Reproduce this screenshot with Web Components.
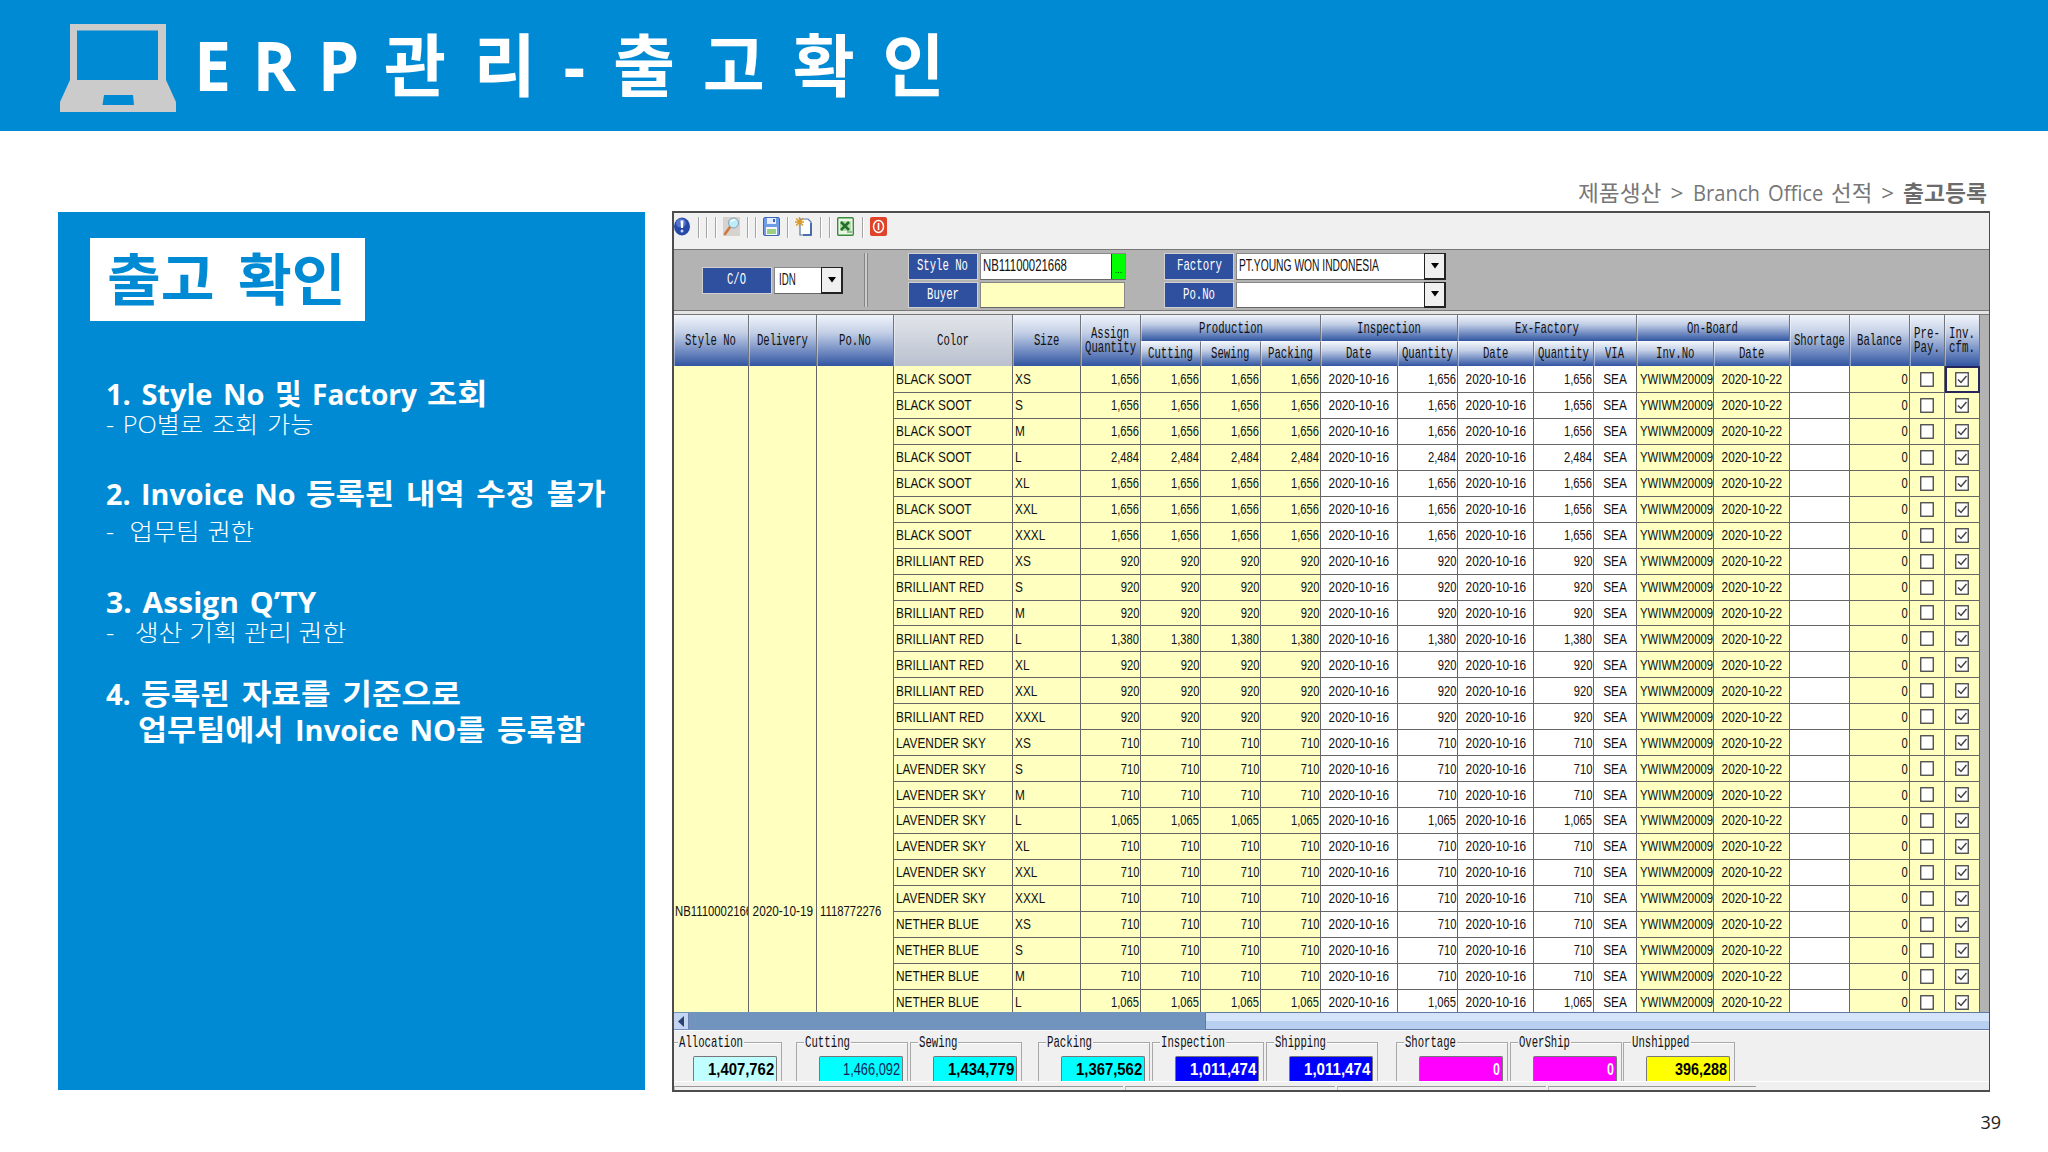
<!DOCTYPE html>
<html lang="ko">
<head>
<meta charset="utf-8">
<title>ERP관리-출고확인</title>
<style>
  html, body { margin: 0; }
  body {
    width: 2048px;
    height: 1152px;
    overflow: hidden;
    background: #fff;
    font-family: "Open Sans", "Noto Sans CJK KR", sans-serif;
  }
</style>
</head>
<body>
<erp-slide></erp-slide>

<script>
"use strict";

// shared helper: attach an open shadow root from a html string
const render = (el, html) => {
  const template = document.createElement('template');
  template.innerHTML = html;
  const root = el.attachShadow({mode: 'open'});
  root.appendChild(template.content.cloneNode(true));
  return root;
};

// fixed pitch caption of the ERP client
const label = (text, pitch = 6.4) => `<fit-text class="mono" w="${(text.length * pitch).toFixed(1)}">${text}</fit-text>`;

const MONO = `
  .mono { font: 17px/14px "Liberation Mono", monospace; }
`;

// slide = header + breadcrumb + two columns
class ErpSlide extends HTMLElement {
  constructor() {
    super();
    render(this, `
      <style>
        :host { display: block; width: 2048px; height: 1152px; }
        nav {
          display: flex; justify-content: flex-end; align-items: center;
          height: 41px; padding: 41px 61px 0 0; color: #777;
          font-size: 21.5px; line-height: 41px;
        }
        nav .path { word-spacing: 3px; font-weight: 400; }
        nav .here { font-weight: 700; color: #6b6b6b; }
        main { display: flex; gap: 27px; padding-left: 58px; height: 881px; margin-top: -2px; }
        footer { padding: 16px 47px 0 0; text-align: right; font-size: 18px; line-height: 28px; color: #222; }
      </style>
      <slide-header></slide-header>
      <nav><fit-text class="path" w="115">제품생산 &gt;&nbsp;</fit-text><fit-text class="path" w="138">Branch Office&nbsp;</fit-text><fit-text class="path" w="72">선적 &gt;&nbsp;</fit-text><fit-text class="here" w="84">출고등록</fit-text></nav>
      <main>
        <guide-panel></guide-panel>
        <erp-window></erp-window>
      </main>
      <footer>39</footer>
    `);
  }
}

class SlideHeader extends HTMLElement {
  constructor() {
    super();
    render(this, `
      <style>
        :host {
          display: flex; height: 131px; box-sizing: border-box; padding: 0 60px;
          background: #008ad3; color: #fff;
        }
        svg { flex: none; margin-top: 24px; }
        h1 { display: flex; margin: 0 0 0 18px; font-size: 68px; line-height: 130px; font-weight: 700; }
        .lat { letter-spacing: 22px; }
        .han { letter-spacing: 28px; margin-left: 3px; }
      </style>
      <svg width="116" height="88" viewBox="0 0 116 88">
        <path fill="#cbcbcb" fill-rule="evenodd" d="M10 0H106V56L116 78V88H0V78L10 56ZM17 6.500V56H98V6.500ZM44 71L42.500 81H74L73 71Z"/>
      </svg>
      <h1><fit-text class="lat" w="187">ERP</fit-text><fit-text class="han" w="588">관리-출고확인</fit-text></h1>
    `);
  }
}

class GuidePanel extends HTMLElement {
  constructor() {
    super();
    render(this, `
      <style>
        :host { display: block; flex: none; width: 587px; height: 878px; margin-top: 1px; background: #008ad3; color: #fff; }
        h2 {
          box-sizing: border-box; width: 275px; height: 83px; margin: 0 0 47px 32px; padding-left: 17px;
          background: #fff; color: #008ad3; font-size: 56px; line-height: 81px; word-spacing: 8px;
        }
        .pad { height: 26px; }
        ol { list-style: none; margin: 0; padding: 0 0 0 48px; }
        li { display: block; }
        b { display: flex; font-size: 29px; line-height: 36px; height: 36px; font-weight: 700; word-spacing: 3px; }
        p { display: block; margin: 0; font-size: 23px; line-height: 30px; height: 30px; font-weight: 300; word-spacing: 2px; }
      </style>
      <div class="pad"></div>
      <h2><fit-text w="239">출고 확인</fit-text></h2>
      <ol>
        <li style="margin-top:55px"><b><fit-text w="169">1. Style No&nbsp;</fit-text><fit-text w="37">및&nbsp;</fit-text><fit-text w="115">Factory&nbsp;</fit-text><fit-text w="60">조회</fit-text></b>
          <p style="margin-top:-3px"><fit-text w="207">- PO별로 조회 가능</fit-text></p></li>
        <li style="margin-top:37px"><b><fit-text w="200">2. Invoice No&nbsp;</fit-text><fit-text w="300">등록된 내역 수정 불가</fit-text></b>
          <p style="margin-top:4px"><fit-text w="148" style="word-spacing:1px">-&nbsp; 업무팀 권한</fit-text></p></li>
        <li style="margin-top:38px"><b><fit-text w="210">3. Assign Q’TY</fit-text></b>
          <p style="margin-top:-3px"><fit-text w="241" style="word-spacing:0">-&nbsp;&nbsp; 생산 기획 관리 권한</fit-text></p></li>
        <li style="margin-top:29px"><b><fit-text w="35">4.&nbsp;</fit-text><fit-text w="320">등록된 자료를 기준으로</fit-text></b>
          <b style="padding-left:32px"><fit-text w="157">업무팀에서&nbsp;</fit-text><fit-text w="161">Invoice NO</fit-text><fit-text w="129">를 등록함</fit-text></b></li>
      </ol>
    `);
  }
}

class ErpWindow extends HTMLElement {
  constructor() {
    super();
    render(this, `
      <style>
        :host {
          display: flex; flex-direction: column; flex: none; box-sizing: border-box;
          width: 1318px; height: 881px; border: 2px solid #4d4d4f; border-right-width: 1px;
          background: #f0f0f0; overflow: hidden; color: #111;
        }
      </style>
      <erp-toolbar></erp-toolbar>
      <erp-filter></erp-filter>
      <erp-grid></erp-grid>
      <erp-scroll></erp-scroll>
      <erp-totals></erp-totals>
    `);
  }
}

class ErpToolbar extends HTMLElement {
  constructor() {
    super();
    render(this, `
      <style>
        :host { display: flex; flex: none; height: 36px; padding-top: 4px; box-sizing: border-box; background: #f0f0f0; }
        svg { flex: none; width: 17px; height: 19px; }
        i { flex: none; width: 1px; height: 21px; background: #a5a5a5; box-shadow: 1px 0 #fff; }
      </style>
      <svg viewBox="0 0 17 19"><ellipse cx="8" cy="9.500" rx="8" ry="9" fill="#2549a8"/><ellipse cx="7" cy="6" rx="5" ry="4.500" fill="#5474cc"/><path d="M6.500 3.500H9.500L9 11H7Z" fill="#fff"/><circle cx="8" cy="14" r="1.500" fill="#c8d4ff"/></svg>
      <i style="margin-left:7px"></i><i style="margin-left:7px"></i><i style="margin-left:8px"></i>
      <svg style="margin-left:7px" viewBox="0 0 17 19"><path d="M0 0H17V19H0Z" fill="#d6d3cf"/><path d="M7 10L2 17" stroke="#d0783c" stroke-width="2.600" stroke-linecap="round"/><circle cx="10.500" cy="6" r="5" fill="#bdecfa" stroke="#8a9fb0"/><path d="M8 5Q9 2.500 12 3" stroke="#fff" stroke-width="1.500" fill="none"/></svg>
      <i style="margin-left:7px"></i><i style="margin-left:7px"></i>
      <svg style="margin-left:7px" viewBox="0 0 17 19"><rect x=".5" y=".5" width="16" height="18" rx="1.500" fill="#6e9be6" stroke="#3b66b8"/><path d="M4 1H13V7H4Z" fill="#e6eefb"/><path d="M10 2H12V5H10Z" fill="#3b66b8"/><path d="M3 10H14V18H3Z" fill="#f4f7ff"/><path d="M4 12H13V17H4Z" fill="#9bcf82"/></svg>
      <i style="margin-left:7px"></i>
      <svg style="margin-left:7px" viewBox="0 0 17 19"><path d="M5 2H13L16 5V18H5Z" fill="#fdfeff" stroke="#5a76a8" stroke-width="1.200"/><path d="M16 6V18H8" fill="none" stroke="#3557a5" stroke-width="1.500"/><path d="M4.500 0V10M0 5H9M1.200 1.500L8 8.500M8 1.500L1.200 8.500" stroke="#dc9a22" stroke-width="1.400"/></svg>
      <i style="margin-left:8px"></i><i style="margin-left:8px"></i>
      <svg style="margin-left:7px" viewBox="0 0 17 19"><rect x=".7" y=".7" width="15.600" height="17.600" rx="1" fill="#e9f5e5" stroke="#3c8a3c" stroke-width="1.400"/><path d="M3 4H14V14H3Z" fill="#b8dcae"/><path d="M4 5L12 13M12 5L4 13" stroke="#21702c" stroke-width="2.600"/><path d="M10 15H15" stroke="#3c8a3c"/></svg>
      <i style="margin-left:8px"></i>
      <svg style="margin-left:7px" viewBox="0 0 17 19"><rect width="17" height="19" rx="2" fill="#e0432a"/><ellipse cx="8.500" cy="9.500" rx="5" ry="6" fill="none" stroke="#fff" stroke-width="1.500"/><path d="M8.500 6V13" stroke="#fff" stroke-width="1.600"/></svg>
    `);
  }
}

class ErpFilter extends HTMLElement {
  constructor() {
    super();
    const drop = `<span class="drop"><svg width="8" height="6"><path d="M0 0H8L4 5.500Z"/></svg></span>`;
    render(this, `
      <style>
        :host {
          display: flex; flex: none; height: 66px; box-sizing: border-box; padding: 3px 0 0 28px;
          background: linear-gradient(#b3b3b3 60px, #777 60px 61px, #e4e4e4 61px 64px, #777 64px) 0 0 / 100% 66px;
          border-top: 1px solid #777;
        }
        ${MONO}
        .group { display: flex; flex-direction: column; gap: 2px; flex: none; }
        .line { display: flex; gap: 2px; height: 26.500px; }
        .cap {
          display: flex; align-items: center; justify-content: center; box-sizing: border-box;
          width: 70px; background: #2f4f9f; color: #fff; border: 1.500px solid #858585;
          outline: 1px solid #d0d0d0; outline-offset: -1px;
        }
        .box { display: flex; box-sizing: border-box; background: #fff; border: 1px solid #888; border-bottom-color: #666; }
        .box fit-text { font: 16px/24px "Liberation Sans", sans-serif; margin-left: 2px; }
        .drop {
          display: flex; align-items: center; justify-content: center; box-sizing: border-box;
          width: 22px; margin: -1px -1px -1px auto; background: #f0f0f0; border: 1px solid #222;
          border-right-width: 2px; border-bottom-width: 2px;
        }
        .dots { width: 13px; margin-left: auto; background: #0f0; border-left: 1px solid #333; font: 9px/33px "Liberation Sans", sans-serif; text-align: center; }
        .rule { width: 2px; height: 54px; border: solid #858585; border-width: 0 1px; margin: 0 40px 0 21px; background: #ccc; }
      </style>
      <div class="group" style="padding-top:14px">
        <div class="line"><span class="cap">${label('C/O')}</span><span class="box" style="width:69px"><fit-text w="17" style="margin-left:4px">IDN</fit-text>${drop}</span></div>
      </div>
      <div class="rule"></div>
      <div class="group">
        <div class="line"><span class="cap">${label('Style No')}</span><span class="box" style="width:146px"><fit-text w="84">NB11100021668</fit-text><span class="dots">...</span></span></div>
        <div class="line"><span class="cap">${label('Buyer')}</span><span class="box" style="width:145px;background:#ffffc0"></span></div>
      </div>
      <div class="group" style="margin-left:38px">
        <div class="line"><span class="cap">${label('Factory')}</span><span class="box" style="width:210px"><fit-text w="140">PT.YOUNG WON INDONESIA</fit-text>${drop}</span></div>
        <div class="line"><span class="cap">${label('Po.No')}</span><span class="box" style="width:210px">${drop}</span></div>
      </div>
    `);
  }
}

const COLS = [75, 68, 77, 119, 68, 60, 60, 60, 60, 77, 60, 76, 60, 43, 77, 76, 60, 60, 35, 35];

// [caption, column, column span, row, row span]
const HEAD = [
  ['Style No', 1, 1, 1, 2], ['Delivery', 2, 1, 1, 2], ['Po.No', 3, 1, 1, 2], ['Color', 4, 1, 1, 2],
  ['Size', 5, 1, 1, 2], ['Assign|Quantity', 6, 1, 1, 2],
  ['Production', 7, 3, 1, 1], ['Inspection', 10, 2, 1, 1], ['Ex-Factory', 12, 3, 1, 1], ['On-Board', 15, 2, 1, 1],
  ['Cutting', 7, 1, 2, 1], ['Sewing', 8, 1, 2, 1], ['Packing', 9, 1, 2, 1],
  ['Date', 10, 1, 2, 1], ['Quantity', 11, 1, 2, 1], ['Date', 12, 1, 2, 1], ['Quantity', 13, 1, 2, 1],
  ['VIA', 14, 1, 2, 1], ['Inv.No', 15, 1, 2, 1], ['Date', 16, 1, 2, 1],
  ['Shortage', 17, 1, 1, 2], ['Balance', 18, 1, 1, 2], ['Pre-|Pay.', 19, 1, 1, 2], ['Inv.|cfm.', 20, 1, 1, 2],
];

const SIZES = ['XS', 'S', 'M', 'L', 'XL', 'XXL', 'XXXL'];
const COLORS = [
  ['BLACK SOOT', '1,656', '2,484', 7],
  ['BRILLIANT RED', '920', '1,380', 7],
  ['LAVENDER SKY', '710', '1,065', 7],
  ['NETHER BLUE', '710', '1,065', 4],
];

class ErpGrid extends HTMLElement {
  constructor() {
    super();
    const root = render(this, `
      <style>
        :host { display: block; flex: none; height: 697px; background: #b3b3b3; overflow: hidden; }
        ${MONO}
        .head, .body { display: grid; width: 1306px; }
        .head { grid-template-rows: 26px 25px; }
        .th {
          display: flex; flex-direction: column; align-items: center; justify-content: center;
          box-sizing: border-box; border-right: 1px solid #70747c; box-shadow: inset 1px 0 #ffffff66;
          background: linear-gradient(#f1f5fb, #c3cfe6 35%, #7f97c8 65%, #3155a2); padding-top: 1px;
        }
        .th.bottom { border-top: 1px solid #f6f8fb; padding-top: 0; }
        .th.color { background: linear-gradient(#e2e5ea, #b9c0ce); }
        .th.two .mono { font-size: 16px; }
        .body { grid-template-rows: 27px; grid-auto-rows: 25.950px; }
        .td {
          display: flex; align-items: center; box-sizing: border-box; min-width: 0; overflow: hidden;
          border-right: 1px solid #666; border-bottom: 1px solid #666; background: #ffffc0;
          font: 14px/20px "Liberation Sans", sans-serif; white-space: nowrap; padding: 0 1px 0 2px;
        }
        .td span { transform: scaleX(.845); transform-origin: 0 50%; flex: none; }
        .num { justify-content: flex-end; }
        .num span { transform: scaleX(.8); transform-origin: 100% 50%; }
        .mid { justify-content: center; padding: 0; }
        .mid span { transform-origin: 50% 50%; }
        .code { padding-left: 3px; }
        .code span { transform: scaleX(.81); }
        .white { background: #fff; }
        .tall { border-bottom: 0; }
        .tall span { margin-top: 440px; }
        .focus { outline: 2px solid #26265c; outline-offset: -2px; }
        svg { flex: none; display: block; }
      </style>
      <div class="head"></div>
      <div class="body"></div>
    `);
    const cols = COLS.map(w => `${w}px`).join(' ');
    const head = root.querySelector('.head');
    const body = root.querySelector('.body');
    head.style.gridTemplateColumns = cols;
    body.style.gridTemplateColumns = cols;
    head.innerHTML = HEAD.map(([text, c, cs, r, rs]) => `
      <div class="th ${r === 2 ? 'bottom' : ''} ${text === 'Color' ? 'color' : ''} ${text.includes('|') ? 'two' : ''}"
        style="grid-area: ${r} / ${c} / span ${rs} / span ${cs}">${text.split('|').map(t => label(t)).join('')}</div>`).join('');
    body.innerHTML = this.rows();
  }

  cell(text, cls, col, row) {
    return `<div class="td ${cls}" style="grid-area: ${row} / ${col}"><span>${text}</span></div>`;
  }

  check(col, row, on) {
    return `<div class="td mid ${on && row === 1 ? 'focus' : ''}" style="grid-area: ${row} / ${col}">
      <svg width="14" height="15"><rect x=".75" y=".75" width="12.500" height="13.500" fill="#fff" stroke="#444" stroke-width="1.300"/>
      ${on ? '<path d="M3 7.500L6 10.500L11.500 4" fill="none" stroke="#444" stroke-width="1.500"/>' : ''}</svg></div>`;
  }

  rows() {
    const merged = [['NB11100021668', 'code'], ['2020-10-19', 'mid'], ['1118772276', 'code']];
    let html = merged.map(([text, cls], i) =>
      `<div class="td tall ${cls}" style="grid-area: 1 / ${i + 1} / span 25 / auto;${i ? '' : 'padding-left:1px'}"><span>${text}</span></div>`).join('');
    let row = 0;
    COLORS.forEach(([color, qty, large, count]) => {
      SIZES.slice(0, count).forEach(size => {
        row += 1;
        const q = size === 'L' ? large : qty;
        html += this.cell(color, '', 4, row) + this.cell(size, '', 5, row);
        [6, 7, 8, 9].forEach(c => { html += this.cell(q, 'num', c, row); });
        [10, 12].forEach(c => { html += this.cell('2020-10-16', 'mid white', c, row); });
        [11, 13].forEach(c => { html += this.cell(q, 'num white', c, row); });
        html += this.cell('SEA', 'mid white', 14, row);
        html += this.cell('YWIWM20009', 'code', 15, row);
        html += this.cell('2020-10-22', 'mid', 16, row);
        html += this.cell('', 'white', 17, row);
        html += this.cell('0', 'num', 18, row);
        html += this.check(19, row, false) + this.check(20, row, true);
      });
    });
    return html;
  }
}

class ErpScroll extends HTMLElement {
  constructor() {
    super();
    render(this, `
      <style>
        :host { display: flex; flex: none; height: 18px; background: #7094bd; }
        .arrow { display: flex; align-items: center; justify-content: center; width: 14px; height: 16px; margin-top: 1px; background: #c3d5f2; border-right: 1px solid #6d83ad; }
        .thumb { box-sizing: border-box; width: 784px; margin-left: auto; background: linear-gradient(#d5e4f8 50%, #b9cfef 50%); border: solid #6079a5; border-width: 1px 0 1px 1px; }
      </style>
      <div class="arrow"><svg width="6" height="11"><path d="M6 0V11L0 5.500Z" fill="#2b416e"/></svg></div>
      <div class="thumb"></div>
    `);
  }
}

// one fieldset with a caption and a coloured amount
class TotalBox extends HTMLElement {
  constructor() {
    super();
    const name = this.getAttribute('name');
    const value = this.getAttribute('value');
    const width = value.length > 7 ? 66 : value.length > 1 ? 52 : 7;
    render(this, `
      <style>
        :host { display: block; flex: none; width: 112px; height: 50px; overflow: hidden; }
        ${MONO}
        .frame { display: grid; grid-template-columns: 8px auto 1fr; align-items: center; height: 23px; }
        .frame i { height: 12px; align-self: end; box-sizing: border-box; border-top: 1px solid #a8a8a8; box-shadow: inset 0 1px #fff; }
        .frame i:first-child { border-left: 1px solid #a8a8a8; }
        .frame i:last-child { border-right: 1px solid #a8a8a8; margin-left: 1px; }
        .frame fit-text { margin: 0 0 0 1px; }
        .in { display: flex; height: 27px; box-sizing: border-box; padding: 2px 0 0 22px; border: solid #a8a8a8; border-width: 0 1px; }
        .val {
          display: flex; justify-content: flex-end; box-sizing: border-box; width: 84px; height: 25px;
          padding-right: 2px; border: 1px solid #777; border-bottom: 0; border-radius: 2px 2px 0 0;
          font: 700 16px/25px "Liberation Sans", sans-serif;
        }
      </style>
      <div class="frame"><i></i>${label(name)}<i></i></div>
      <div class="in"><div class="val" style="background:${this.getAttribute('fill')};color:${this.getAttribute('ink') || '#000'};${this.hasAttribute('thin') ? 'font-weight:400' : ''}"><fit-text w="${this.hasAttribute('thin') ? 57 : width}">${value}</fit-text></div></div>
    `);
  }
}

class ErpTotals extends HTMLElement {
  constructor() {
    super();
    render(this, `
      <style>
        :host { display: block; flex: 1; background: #f0f0f0; border-top: 1px solid #fafafa; }
        .row { display: flex; height: 50px; margin-left: -4px; border-bottom: 1px solid #fff; }
        .status { display: flex; gap: 2px; padding-top: 4px; width: 1084px; }
        .status i { height: 4px; flex: none; border-top: 1px solid #999; border-left: 1px solid #bbb; box-sizing: border-box; }
      </style>
      <div class="row">
        <total-box name="Allocation" value="1,407,762" fill="#c0ffff"></total-box>
        <total-box name="Cutting" value="1,466,092" fill="#0ff" ink="#125" thin style="margin-left:14px"></total-box>
        <total-box name="Sewing" value="1,434,779" fill="#0ff" style="margin-left:2px"></total-box>
        <total-box name="Packing" value="1,367,562" fill="#0ff" style="margin-left:16px"></total-box>
        <total-box name="Inspection" value="1,011,474" fill="#00f" ink="#fff" style="margin-left:2px"></total-box>
        <total-box name="Shipping" value="1,011,474" fill="#00f" ink="#fff" style="margin-left:2px"></total-box>
        <total-box name="Shortage" value="0" fill="#f0f" ink="#fff" style="margin-left:18px"></total-box>
        <total-box name="OverShip" value="0" fill="#f0f" ink="#fff" style="margin-left:2px"></total-box>
        <total-box name="Unshipped" value="396,288" fill="#ff0" style="margin-left:1px"></total-box>
      </div>
      <div class="status"><i style="width:449px"></i><i style="width:210px"></i><i style="width:209px"></i><i style="width:208px"></i></div>
    `);
  }
}

// squeezes or stretches its text to the width given in px
class FitText extends HTMLElement {
  constructor() {
    super();
    this.root = render(this, `
      <style>
        :host { display: inline-block; flex: none; white-space: nowrap; }
        span { display: inline-block; transform-origin: 0 50%; white-space: nowrap; }
      </style>
      <span><slot></slot></span>
    `);
  }

  connectedCallback() {
    const width = parseFloat(this.getAttribute('w'));
    const span = this.root.querySelector('span');
    const natural = span.offsetWidth;
    this.style.width = `${width}px`;
    if (natural) {
      span.style.transform = `scaleX(${width / natural})`;
    }
  }
}

customElements.define('erp-slide', ErpSlide);
customElements.define('slide-header', SlideHeader);
customElements.define('guide-panel', GuidePanel);
customElements.define('erp-window', ErpWindow);
customElements.define('erp-toolbar', ErpToolbar);
customElements.define('erp-filter', ErpFilter);
customElements.define('erp-grid', ErpGrid);
customElements.define('erp-scroll', ErpScroll);
customElements.define('erp-totals', ErpTotals);
customElements.define('total-box', TotalBox);
// last, so that the text around it already has its fonts when measured
customElements.define('fit-text', FitText);
</script>
</body>
</html>
